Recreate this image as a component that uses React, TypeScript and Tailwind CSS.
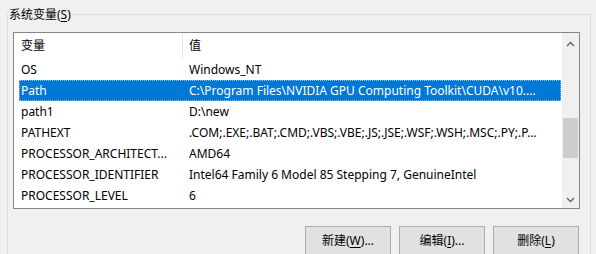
import React from "react";

const FONT = { fontFamily: '"Noto Sans", "Noto Sans CJK SC", sans-serif' };

const rows: [string, string][] = [
  ["OS", "Windows_NT"],
  ["Path", "C:\\Program Files\\NVIDIA GPU Computing Toolkit\\CUDA\\v10...."],
  ["path1", "D:\\new"],
  ["PATHEXT", ".COM;.EXE;.BAT;.CMD;.VBS;.VBE;.JS;.JSE;.WSF;.WSH;.MSC;.PY;.P..."],
  ["PROCESSOR_ARCHITECT...", "AMD64"],
  ["PROCESSOR_IDENTIFIER", "Intel64 Family 6 Model 85 Stepping 7, GenuineIntel"],
  ["PROCESSOR_LEVEL", "6"],
];

function Chevron({ up }: { up?: boolean }) {
  return (
    <svg width="9" height="6" viewBox="0 0 9 6" className="block">
      <path
        d={up ? "M1 5 L4.5 1.5 L8 5" : "M1 1 L4.5 4.5 L8 1"}
        fill="none"
        stroke="#606060"
        strokeWidth="1.3"
      />
    </svg>
  );
}

function Btn({ label, k, rest }: { label: string; k: string; rest: string }) {
  return (
    <div className="w-[86px] h-[29px] shrink-0 bg-[#e1e1e1] border border-[#adadad] flex items-center justify-center text-[12px] leading-[16px] text-black">
      <span>
        {label}(<span className="underline underline-offset-2">{k}</span>){rest}
      </span>
    </div>
  );
}

export default function App() {
  return (
    <div
      className="relative w-[596px] h-[254px] overflow-hidden bg-[#f0f0f0] text-black"
      style={FONT}
    >
      <div className="mt-[14px] ml-[7px] w-[584px] h-[260px] border border-[#dcdcdc] pt-[17px] pl-[5px]">
        {/* List view */}
        <div className="w-[567px] h-[177px] border border-[#828790] bg-white flex">
          <div className="w-[548px] flex flex-col">
            <div className="h-[26px] flex items-center text-[12px] leading-[16px] shrink-0">
              <div className="w-[169px] h-full pl-[7px] flex items-center border-r border-[#e5e5e5]">
                变量
              </div>
              <div className="pl-[6px]">值</div>
            </div>
            {rows.map(([n, v], i) => {
              const sel = i === 1;
              return (
                <div key={n} className="h-[21px] shrink-0 pl-[5px] pr-[1px]">
                  <div
                    className={
                      "h-full flex items-center text-[12px] leading-[16px] whitespace-nowrap overflow-hidden " +
                      (sel
                        ? "bg-[#0078d7] text-white border border-dotted border-[#8fc2ec]"
                        : "border border-transparent")
                    }
                  >
                    <div className="w-[163px] pl-[1px] shrink-0">{n}</div>
                    <div className="pl-[6px]">{v}</div>
                  </div>
                </div>
              );
            })}
          </div>
          {/* Scrollbar */}
          <div className="w-[17px] h-full bg-[#f0f0f0] flex flex-col items-center">
            <div className="h-[21px] w-full flex items-center justify-center">
              <Chevron up />
            </div>
            <div className="h-[64px]" />
            <div className="w-[15px] h-[40px] bg-[#cdcdcd]" />
            <div className="flex-1" />
            <div className="h-[17px] w-full flex items-center justify-center">
              <Chevron />
            </div>
          </div>
        </div>
        {/* Buttons */}
        <div className="w-[567px] mt-[17px] pr-[1px] flex justify-end gap-[8px]">
          <Btn label="新建" k="W" rest="..." />
          <Btn label="编辑" k="I" rest="..." />
          <Btn label="删除" k="L" rest="" />
        </div>
      </div>
      <div className="absolute left-[8px] top-[7px] px-[1px] bg-[#f0f0f0] text-[12px] leading-[16px]">
        系统变量(<span className="underline underline-offset-2">S</span>)
      </div>
    </div>
  );
}
